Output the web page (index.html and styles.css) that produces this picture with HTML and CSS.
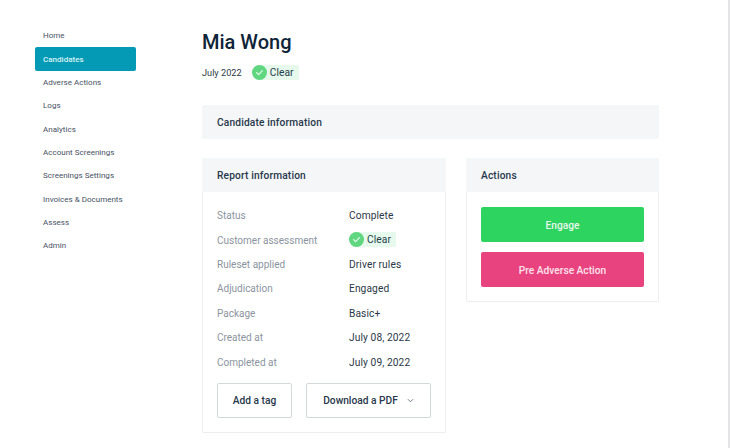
FILE: index.html
```html
<!DOCTYPE html>
<html lang="en">
<head>
<meta charset="utf-8">
<title>Mia Wong</title>
<link rel="stylesheet" href="styles.css">
</head>
<body>
<div class="page">
  <nav class="nav">
    <a class="nav-item">Home</a>
    <a class="nav-item active">Candidates</a>
    <a class="nav-item">Adverse Actions</a>
    <a class="nav-item">Logs</a>
    <a class="nav-item">Analytics</a>
    <a class="nav-item">Account Screenings</a>
    <a class="nav-item">Screenings Settings</a>
    <a class="nav-item">Invoices &amp; Documents</a>
    <a class="nav-item">Assess</a>
    <a class="nav-item">Admin</a>
  </nav>
  <main class="main">
    <h1 class="title">Mia Wong</h1>
    <div class="meta">
      <span class="date">July 2022</span>
      <span class="badge">
        <svg class="check" viewBox="0 0 15 15" aria-hidden="true"><circle cx="7.5" cy="7.5" r="7.5" fill="#5fd67f"/><path d="M4.6 7.7l2 2 3.8-4" fill="none" stroke="#e8fbee" stroke-width="1.2" stroke-linecap="round" stroke-linejoin="round"/></svg>
        <span>Clear</span>
      </span>
    </div>
    <section class="banner">Candidate information</section>
    <div class="columns">
      <section class="card report">
        <header class="card-head">Report information</header>
        <div class="card-body report-body">
          <dl class="rows">
            <div class="row"><dt>Status</dt><dd>Complete</dd></div>
            <div class="row"><dt>Customer assessment</dt><dd><span class="badge">
              <svg class="check" viewBox="0 0 15 15" aria-hidden="true"><circle cx="7.5" cy="7.5" r="7.5" fill="#5fd67f"/><path d="M4.6 7.7l2 2 3.8-4" fill="none" stroke="#e8fbee" stroke-width="1.2" stroke-linecap="round" stroke-linejoin="round"/></svg>
              <span>Clear</span></span></dd></div>
            <div class="row"><dt>Ruleset applied</dt><dd>Driver rules</dd></div>
            <div class="row"><dt>Adjudication</dt><dd>Engaged</dd></div>
            <div class="row"><dt>Package</dt><dd>Basic+</dd></div>
            <div class="row"><dt>Created at</dt><dd>July 08, 2022</dd></div>
            <div class="row"><dt>Completed at</dt><dd>July 09, 2022</dd></div>
          </dl>
          <div class="btns">
            <button class="btn tag">Add a tag</button>
            <button class="btn pdf">Download a PDF
              <svg class="chev" viewBox="0 0 8 5" aria-hidden="true"><path d="M1 1l3 3 3-3" fill="none" stroke="#5f6b78" stroke-width="1"/></svg>
            </button>
          </div>
        </div>
      </section>
      <section class="card actions">
        <header class="card-head">Actions</header>
        <div class="card-body actions-body">
          <button class="act engage">Engage</button>
          <button class="act pre">Pre Adverse Action</button>
        </div>
      </section>
    </div>
  </main>
</div>
</body>
</html>
```
FILE: styles.css
```css
* { box-sizing: border-box; }
html, body { margin: 0; height: 100%; }
body {
  background: #fff;
  color: #1f2d3d;
  font-family: Roboto, "Noto Sans", sans-serif;
  overflow: hidden;
}
.page {
  width: 730px;
  height: 448px;
  display: flex;
  padding-left: 35px;
  border-right: 2px solid #e4e4e6;
  overflow: hidden;
}
.nav {
  width: 101px;
  padding-top: 24px;
  display: flex;
  flex-direction: column;
  flex: none;
}
.nav-item {
  height: 23.33px;
  display: flex;
  align-items: center;
  padding: 0.6px 0 0 8px;
  font-size: 8px;
  letter-spacing: 0.02px;
  color: #47525f;
  white-space: nowrap;
  border-radius: 2px;
}
.nav-item.active {
  background: #049ab5;
  color: #d9f3f5;
  font-weight: 500;
}
.main { width: 457px; margin-left: 66px; flex: none; }
.title {
  margin: 28px 0 0;
  font-size: 20px;
  line-height: 28px;
  font-weight: 500;
  color: #0f2438;
}
.meta {
  display: flex;
  align-items: center;
  height: 16px;
  margin-top: 8px;
  gap: 10px;
}
.date { font-size: 9.2px; color: #2c3845; }
.badge {
  display: inline-flex;
  align-items: center;
  gap: 3px;
  height: 15px;
  padding-right: 5px;
  background: #e6f9ec;
  border-radius: 8px 2px 2px 8px;
  font-size: 10.2px;
  letter-spacing: 0.1px;
  color: #24404a;
}
.check { width: 15px; height: 15px; display: block; }
.banner {
  margin-top: 25px;
  height: 34px;
  padding-left: 15px;
  display: flex;
  align-items: center;
  background: #f5f6f8;
  border-radius: 2px;
  font-size: 10.2px;
  font-weight: 500;
  letter-spacing: 0.15px;
  color: #27384a;
}
.columns {
  display: flex;
  align-items: flex-start;
  gap: 20px;
  margin-top: 19px;
}
.card {
  background: #fff;
  border: 1px solid #eceef1;
  border-top: 0;
  border-radius: 2px;
}
.card-head {
  height: 34px;
  padding-left: 15px;
  display: flex;
  align-items: center;
  margin: 0 -1px;
  background: #f5f6f8;
  font-size: 10.2px;
  font-weight: 500;
  letter-spacing: 0.15px;
  color: #27384a;
}
.report { width: 244px; height: 275px; }
.actions { width: 193px; height: 144px; }
.report-body { padding: 11.4px 14px 0; }
.rows { margin: 0; }
.row {
  display: flex;
  align-items: center;
  height: 24.45px;
  font-size: 10.2px;
  letter-spacing: 0.1px;
}
.row dt { width: 132px; color: #8b949e; font-size: 10px; letter-spacing: 0; }
.row dd { margin: 0; color: #2b3846; }
.btns { display: flex; gap: 14px; margin-top: 8.6px; }
.btn {
  height: 35px;
  background: #fff;
  border: 1px solid #d4d8dd;
  border-radius: 2px;
  font: 500 10.2px Roboto, "Noto Sans", sans-serif;
  color: #27384a;
  padding: 0;
}
.tag { width: 75px; }
.pdf {
  width: 125px;
  display: flex;
  align-items: center;
  justify-content: center;
  gap: 9px;
}
.chev { width: 7px; height: 5px; display: block; }
.actions-body {
  padding: 15px 14px 0;
  display: flex;
  flex-direction: column;
  gap: 10px;
}
.act {
  height: 35px;
  border: 0;
  border-radius: 2px;
  padding: 1px 0 0;
  font: 500 10.2px Roboto, "Noto Sans", sans-serif;
  color: #e9f7ee;
}
.engage { background: #2dd45f; }
.pre { background: #e8437f; color: #fbe3ec; }
```
